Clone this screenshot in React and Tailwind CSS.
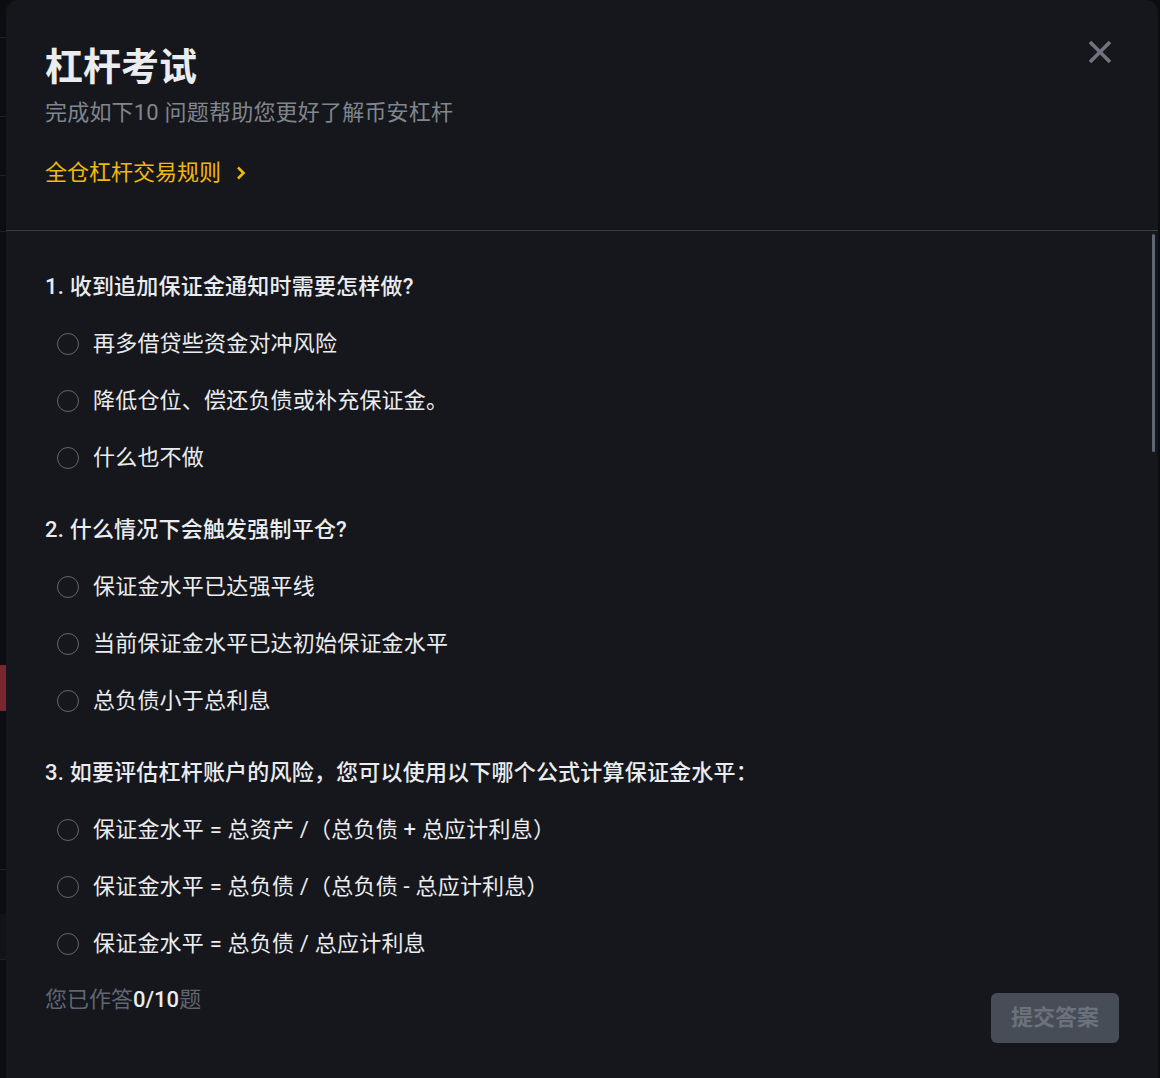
import React from 'react';

const questions = [
  {
    title: '1. 收到追加保证金通知时需要怎样做?',
    options: ['再多借贷些资金对冲风险', '降低仓位、偿还负债或补充保证金。', '什么也不做'],
  },
  {
    title: '2. 什么情况下会触发强制平仓?',
    options: ['保证金水平已达强平线', '当前保证金水平已达初始保证金水平', '总负债小于总利息'],
  },
  {
    title: '3. 如要评估杠杆账户的风险，您可以使用以下哪个公式计算保证金水平：',
    options: [
      '保证金水平 = 总资产 /（总负债 + 总应计利息）',
      '保证金水平 = 总负债 /（总负债 - 总应计利息）',
      '保证金水平 = 总负债 / 总应计利息',
    ],
  },
];

const font = { fontFamily: 'Roboto, "Noto Sans CJK SC", sans-serif' };

// page behind the modal, only a thin sliver shows on the left
const Backdrop = () => (
  <div className="flex w-[6px] shrink-0 flex-col bg-[#0b0d10]">
    <div className="h-[38px] border-b border-[#1c1f25]" />
    <div className="h-[79px] border-b border-[#1c1f25]" />
    <div className="h-[59px] border-b border-[#1c1f25]" />
    <div className="h-[56px] border-b border-[#1c1f25]" />
    <div className="h-[433px]" />
    <div className="h-[46px] bg-[#7a2630]" />
    <div className="h-[159px] border-b border-[#1c1f25]" />
    <div className="h-[44px]" />
    <div className="h-[46px] border-b border-[#1c1f25] bg-[#101317]" />
  </div>
);

const App = () => {
  return (
    <div className="flex h-[1078px] w-[1160px] overflow-hidden bg-[#0b0d10]" style={font}>
      <Backdrop />

      <div className="flex h-[1078px] w-[1152px] shrink-0 flex-col overflow-hidden rounded-t-xl bg-[#16171c]">
        {/* Header */}
        <div className="flex items-start justify-between pl-[39px] pr-[46px] pt-[44px] pb-[42px]">
          <div>
            <h2 className="text-[38px] font-bold leading-[46px] text-[#eaecef]">杠杆考试</h2>
            <p className="mt-[8px] text-[22px] leading-[30px] tracking-[0.2px] text-[#80868f]">完成如下10 问题帮助您更好了解币安杠杆</p>
            <a href="#" className="mt-[30px] flex items-center gap-[14px] text-[22px] leading-[30px] text-[#f0b90b]">
              全仓杠杆交易规则
              <svg width="12" height="16" viewBox="0 0 12 16" fill="none">
                <path d="M3 2.5 L8.5 8 L3 13.5" stroke="#f0b90b" strokeWidth="2.6" />
              </svg>
            </a>
          </div>
          <button className="mt-[-4px]" aria-label="close">
            <svg width="24" height="24" viewBox="0 0 24 24" fill="none">
              <path d="M2 2 L22 22 M22 2 L2 22" stroke="#6f7580" strokeWidth="3.6" />
            </svg>
          </button>
        </div>

        <div className="h-px bg-[#3a3e45]" />

        {/* Questions */}
        <div className="relative h-[739px] shrink-0 overflow-hidden">
          <div className="flex flex-col gap-[42px] px-[39px] pt-[41px]">
            {questions.map((q) => (
              <div key={q.title} className="flex flex-col gap-[27px]">
                <div className="text-[22px] font-medium leading-[30px] tracking-[0.2px] text-[#eaecef]">{q.title}</div>
                {q.options.map((opt) => (
                  <label key={opt} className="flex items-center gap-[14px] pl-[12px] text-[22px] leading-[30px] tracking-[0.2px] text-[#eaecef]">
                    <span className="h-[22px] w-[22px] shrink-0 rounded-full border-[1.5px] border-[#5e6673]" />
                    {opt}
                  </label>
                ))}
              </div>
            ))}
          </div>
          {/* scrollbar thumb */}
          <div className="absolute right-[3px] top-[3px] h-[218px] w-[3px] rounded-full bg-[#5e6673]" />
        </div>

        {/* Footer */}
        <div className="flex items-start justify-between px-[39px] pt-[15px]">
          <p className="text-[22px] leading-[30px] text-[#5e6673]">
            您已作答<b className="font-medium text-[#eaecef]">0/10</b>题
          </p>
          <button
            disabled
            className="mt-[8px] h-[50px] w-[128px] rounded-md bg-[#474d57] text-[22px] font-bold leading-[50px] text-[#6c727c]"
          >
            提交答案
          </button>
        </div>
      </div>

      <div className="w-[2px] shrink-0 bg-[#0b0d10]" />
    </div>
  );
};

export default App;
